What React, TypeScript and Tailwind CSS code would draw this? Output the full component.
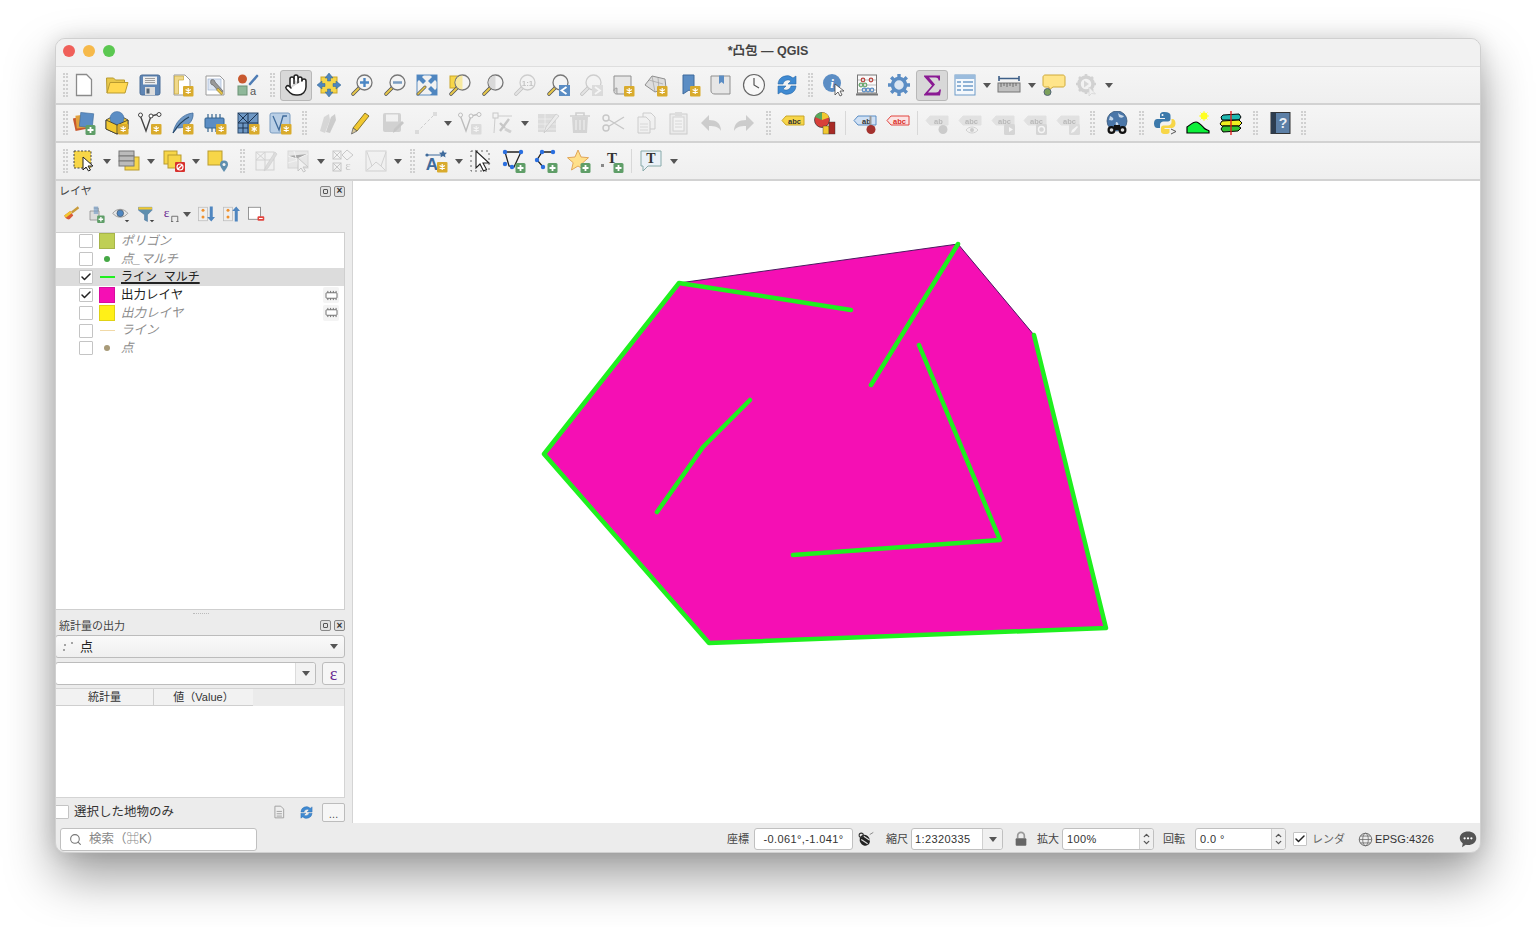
import { Hand, Search, Check, ChevronUp, ChevronDown } from 'lucide-react'
import type { ReactNode } from 'react'

const Nw = (
  <g>
    <rect x="13" y="13" width="10.5" height="10.5" rx="1" fill="#d9ab2d" />
    <path d="M18.2 15v6M15.6 16.5l5.2 3M20.8 16.5l-5.2 3" stroke="#fff" strokeWidth="1.2" />
  </g>
)
const Pl = (
  <g>
    <rect x="13.5" y="14" width="10" height="10" rx="1.5" fill="#5f9e68" />
    <path d="M18.5 16v6M15.5 19h6" stroke="#fff" strokeWidth="1.8" />
  </g>
)
const Mag = (inner?: ReactNode) => (
  <>
    <path d="M9 15 3 21" stroke="#555" strokeWidth="3.6" strokeLinecap="round" />
    <path d="M9 15 3 21" stroke="#e8c84a" strokeWidth="2" strokeLinecap="round" />
    <circle cx="14.5" cy="9.5" r="7.5" fill="#f4f4f4" stroke="#777" strokeWidth="1.3" />
    {inner}
  </>
)
const Label = (fill: string, stroke: string, txt: string, tc = '#333') => (
  <>
    <path d="M5 5h18v9H5L1 9.5z" fill={fill} stroke={stroke} />
    <text x="13.5" y="12.5" fontSize="7.5" fontWeight="700" textAnchor="middle" fill={tc} fontFamily="Liberation Sans">{txt}</text>
  </>
)
const Nodes = (
  <>
    <path d="M2 4l6 16 5-15 8-2" fill="none" stroke="#444" strokeWidth="1.4" />
    <circle cx="2.5" cy="4" r="2" fill="#fff" stroke="#444" />
    <circle cx="13" cy="5" r="2" fill="#fff" stroke="#444" />
    <circle cx="21" cy="3.5" r="2" fill="#fff" stroke="#444" />
  </>
)
const Refresh = (
  <>
    <path d="M3 11a9 9 0 0 1 15-6l3-2v8h-8l3-3a5 5 0 0 0-8 3z" fill="#3f8ad2" stroke="#2a6aa8" strokeWidth=".6" />
    <path d="M21 13a9 9 0 0 1-15 6l-3 2v-8h8l-3 3a5 5 0 0 0 8-3z" fill="#3f8ad2" stroke="#2a6aa8" strokeWidth=".6" />
  </>
)

const icons: Record<string, ReactNode> = {
  new: <path d="M4.5 1.5h10l5 5v16h-15z" fill="#fff" stroke="#8a8a8a" strokeWidth="1.3" />,
  open: (
    <>
      <path d="M2 20 1.5 5h7l2 2h9v3" fill="#e8c84a" stroke="#b99b2f" />
      <path d="M2 20 5 9.5h18L20 20z" fill="#ffd84f" stroke="#b99b2f" />
    </>
  ),
  save: (
    <>
      <rect x="2" y="2" width="20" height="20" rx="2" fill="#5f86b5" stroke="#4a6d96" />
      <rect x="5" y="3.5" width="14" height="8" fill="#eee" />
      <path d="M7 5.5h10M7 7.5h10M7 9.5h10" stroke="#888" strokeWidth=".8" />
      <rect x="7" y="14" width="10" height="8" fill="#ddd" />
      <rect x="8.5" y="15.5" width="3" height="5" fill="#567" />
    </>
  ),
  layout: (
    <>
      <path d="M4 2h11l5 5v15H4z" fill="#fff" stroke="#999" />
      <path d="M4.5 3h9v4h-5v14h-4z" fill="#f1d989" stroke="#c6a93c" strokeWidth=".7" />
      {Nw}
    </>
  ),
  mgr: (
    <>
      <path d="M3 3h14l4 4v15H3z" fill="#fff" stroke="#999" />
      <rect x="5" y="6" width="13" height="11" fill="#dfe7f3" stroke="#9fb4d3" strokeWidth=".7" />
      <path d="M8 7c2-1 4 0 4 2l8 9-2 3-8-9c-2 0-3-2-2-5z" fill="#999" stroke="#555" strokeWidth=".6" />
      <path d="M15 15l5 5-1.5 2-5-5z" fill="#e0c04a" stroke="#8a7420" strokeWidth=".5" />
    </>
  ),
  style: (
    <>
      <circle cx="6.5" cy="6" r="4.5" fill="#c8592f" />
      <path d="M14 11 21 3" stroke="#4f7db5" strokeWidth="2.6" strokeLinecap="round" />
      <rect x="2" y="13" width="9" height="9" fill="#8fb89a" stroke="#6a9275" />
      <text x="17" y="22" fontSize="11" textAnchor="middle" fill="#555" fontFamily="Liberation Sans">a</text>
    </>
  ),
  pan: <Hand size={24} fill="#fff" stroke="#222" strokeWidth={1.5} />,
  panSel: (
    <>
      <rect x="4" y="4" width="16" height="16" fill="#f7d648" stroke="#c9a62a" />
      <path d="M12 0l4 5h-2.5v3h-3V5H8zM12 24l4-5h-2.5v-3h-3v3H8zM0 12l5-4v2.5h3v3H5V16zM24 12l-5-4v2.5h-3v3h3V16z" fill="#4f86c0" stroke="#35648f" strokeWidth=".5" />
    </>
  ),
  zin: Mag(<path d="M14.5 5v9M10 9.5h9" stroke="#4a86c4" strokeWidth="2.4" />),
  zout: Mag(<path d="M10 9.5h9" stroke="#7a9cc0" strokeWidth="2.4" />),
  zfull: (
    <>
      <rect x="2" y="2" width="20" height="20" fill="#f1f1f1" stroke="#5c8ec2" />
      <path d="M2 2h7L7 4l4 4-3 3-4-4-2 2zM22 2v7l-2-2-4 4-3-3 4-4-2-2zM22 22h-7l2-2-4-4 3-3 4 4 2-2z" fill="#4f86c0" />
      <path d="M10 14 3 21" stroke="#555" strokeWidth="3" strokeLinecap="round" />
      <path d="M10 14 3 21" stroke="#e8c84a" strokeWidth="1.6" strokeLinecap="round" />
    </>
  ),
  zsel: (
    <>
      <rect x="2" y="3" width="11" height="12" fill="#f7d648" stroke="#c9a62a" />
      {Mag()}
      <path d="M14.5 2.5a7 7 0 0 0 0 14z" fill="#f7e9a0" />
    </>
  ),
  zlayer: Mag(<path d="M14.5 2.5a7 7 0 0 0 0 14z" fill="#d9d9d9" />),
  znative: Mag(<text x="14.5" y="12.5" fontSize="8" textAnchor="middle" fontWeight="700" fill="#555" fontFamily="Liberation Sans">1:1</text>),
  zlast: (
    <>
      {Mag()}
      <rect x="13" y="12" width="11" height="11" fill="#5b8dc4" />
      <path d="M20.5 14l-5 3.5 5 3.5" fill="none" stroke="#fff" strokeWidth="1.8" />
    </>
  ),
  znext: (
    <>
      {Mag()}
      <rect x="13" y="12" width="11" height="11" fill="#aaa" />
      <path d="M16 14l5 3.5-5 3.5" fill="none" stroke="#fff" strokeWidth="1.8" />
    </>
  ),
  map: (
    <>
      <path d="M3 3h17v18H6c-2 0-3-1-3-3z" fill="#e6e6e6" stroke="#8f8f8f" />
      <path d="M3 18c0-2 1-3 3-3v6" fill="#ccc" stroke="#8f8f8f" strokeWidth=".7" />
      {Nw}
    </>
  ),
  map3d: (
    <>
      <path d="M1 12 8 3l13 3 1 9-11 4z" fill="#ddd" stroke="#8f8f8f" />
      <path d="M5 7l14 4M8 3l3 16M14 4.5 15 17" stroke="#999" strokeWidth=".6" />
      {Nw}
    </>
  ),
  bookmark: (
    <>
      <path d="M6 2h11v18l-5-3-6 4z" fill="#5b8dc4" stroke="#3f6b9c" />
      {Nw}
    </>
  ),
  bookmarks: (
    <>
      <path d="M2 3h19v18H6c-2 0-4-1-4-3z" fill="#e6e6e6" stroke="#8f8f8f" />
      <path d="M10 2.5h5v8.5l-2.5-2-2.5 2z" fill="#5b8dc4" />
    </>
  ),
  clock: (
    <>
      <circle cx="12" cy="12" r="10.5" fill="#f8f8f8" stroke="#666" strokeWidth="1.2" />
      <path d="M12 5v7l5 3" fill="none" stroke="#555" strokeWidth="1.2" />
    </>
  ),
  refresh: Refresh,
  identify: (
    <>
      <circle cx="10" cy="10" r="9" fill="#5b8dc4" />
      <text x="10" y="15" fontSize="13" fontWeight="700" fontStyle="italic" textAnchor="middle" fill="#fff" fontFamily="Liberation Serif">i</text>
      <path d="M13 11v11l3-3 2 4 2-1-2-4h4z" fill="#fff" stroke="#444" strokeWidth=".8" />
    </>
  ),
  abacus: (
    <>
      <rect x="2.5" y="2" width="19" height="18" fill="#fafafa" stroke="#777" />
      <path d="M3 7h18M3 12h18M3 17h18" stroke="#999" strokeWidth=".6" />
      <path d="M1 21.5h22" stroke="#777" strokeWidth="2" />
      <g fill="none" strokeWidth="1.2">
        <g stroke="#b9433d"><circle cx="8" cy="7" r="1.8" /><circle cx="16" cy="7" r="1.8" /></g>
        <g stroke="#69a86f"><circle cx="6" cy="12" r="1.8" /><circle cx="10" cy="12" r="1.8" /></g>
        <g stroke="#5b8dc4"><circle cx="9" cy="17" r="1.8" /><circle cx="13" cy="17" r="1.8" /><circle cx="17" cy="17" r="1.8" /></g>
      </g>
    </>
  ),
  gear: (
    <>
      <circle cx="12" cy="12" r="6.5" fill="#dbe6f2" stroke="#5b8dc4" strokeWidth="3.5" />
      <path d="M12 1v4M12 19v4M1 12h4M19 12h4M4.2 4.2l2.800 2.800M17 17l2.800 2.800M19.800 4.200l-2.800 2.800M7 17l-2.800 2.800" stroke="#5b8dc4" strokeWidth="3.4" />
    </>
  ),
  sigma: <path d="M4 2.5h16v5h-1.500c0-2-1-3-3-3H9l6 7-7 8h8c2 0 3-1 3.500-3H21l-1 6H4v-1l8-9-8-9z" fill="#8a1a93" />,
  table: (
    <>
      <rect x="2" y="2" width="20" height="20" fill="#f4f8fc" stroke="#6e9bc8" />
      <rect x="2" y="2" width="20" height="4" fill="#9bbcdd" />
      <path d="M4 9h4M10 9h10M4 13h4M10 13h10M4 17h4M10 17h10" stroke="#6e9bc8" strokeWidth="1.4" />
    </>
  ),
  ruler: (
    <>
      <path d="M2 3v5M22 3v5M2 5.500h20" stroke="#3e5f88" strokeWidth="1.6" />
      <rect x="1" y="10" width="22" height="9" fill="#c0c0c0" stroke="#777" />
      <path d="M4 10v4M7 10v3M10 10v4M13 10v3M16 10v4M19 10v3" stroke="#555" strokeWidth=".8" />
    </>
  ),
  tips: (
    <>
      <path d="M3 2h18c1 0 2 1 2 2v8c0 1-1 2-2 2H11l-4 3v-3H3c-1 0-2-1-2-2V4c0-1 1-2 2-2z" fill="#ffe58a" stroke="#cfaa3a" />
      <circle cx="5.5" cy="19" r="3.5" fill="#7ba05b" stroke="#567" />
    </>
  ),
  play: (
    <>
      <circle cx="11" cy="11" r="7" fill="none" stroke="#888" strokeWidth="3.5" />
      <path d="M11 1v3M11 18v3M1 11h3M18 11h3M4 4l2 2M16 16l2 2M18 4l-2 2M4 18l2-2" stroke="#888" strokeWidth="2.6" />
      <path d="M9 7.500v7l5-3.500z" fill="#999" />
      <path d="M14 14v9l2.500-2.500 4 .5z" fill="#eee" stroke="#999" strokeWidth=".8" />
    </>
  ),
  dsm: (
    <>
      <rect x="2" y="6" width="13" height="13" transform="rotate(-12 8 12)" fill="#c8592f" />
      <rect x="4" y="4" width="13" height="13" transform="rotate(-6 10 10)" fill="#e2a13c" />
      <rect x="8" y="2" width="13" height="14" transform="rotate(6 14 9)" fill="#5b8dc4" stroke="#3f6b9c" strokeWidth=".6" />
      {Pl}
    </>
  ),
  gpkg: (
    <>
      <path d="M1 9l11-6 11 6v9l-11 5-11-5z" fill="#f1c830" stroke="#333" strokeWidth=".8" />
      <circle cx="12" cy="7.500" r="7" fill="#5b8dc4" stroke="#3f6b9c" strokeWidth=".5" />
      <path d="M1 9l11 5 11-5v9l-11 5-11-5z" fill="#f1c830" stroke="#333" strokeWidth=".8" />
      <path d="M12 14v9" stroke="#333" strokeWidth=".8" />
      {Nw}
    </>
  ),
  shp: <>{Nodes}{Nw}</>,
  feather: (
    <>
      <path d="M3 22C5 12 12 3 23 2c1 8-6 15-15 15" fill="#6d97c4" stroke="#3f6b9c" strokeWidth=".8" />
      <path d="M3 22C8 14 13 9 19 6" fill="none" stroke="#22415f" strokeWidth="1.1" />
      {Nw}
    </>
  ),
  chip: (
    <>
      <rect x="2" y="7" width="19" height="10" rx="1" fill="#5b8dc4" stroke="#35648f" />
      <path d="M5 3v4M9 3v4M13 3v4M17 3v4M5 17v4M9 17v4M13 17v4" stroke="#35648f" strokeWidth="1.2" />
      {Nw}
    </>
  ),
  mesh: (
    <>
      <rect x="2" y="2" width="20" height="20" fill="#6d97c4" stroke="#2f4f73" />
      <path d="M2 12h20M12 2v20M2 2l10 10M12 2 2 12M12 12l10-10M2 17h10M7 12v10" stroke="#1d3553" strokeWidth="1" />
      {Nw}
    </>
  ),
  virtual: (
    <>
      <rect x="2" y="2" width="20" height="20" rx="2" fill="#b9cfe6" stroke="#7b9cc0" />
      <path d="M5 5l6 14 4-14 4 0" fill="none" stroke="#3f6b9c" strokeWidth="1.3" />
      {Nw}
    </>
  ),
  pencils: (
    <>
      <path d="M4 20 8 6l5-3 1 6-5 13z" fill="#999" />
      <path d="M10 21l5-15 4-3 1 6-6 13z" fill="#777" />
    </>
  ),
  pencil: (
    <>
      <path d="M5 17 17 2l4 3L9 20z" fill="#f1c830" stroke="#7a6a22" strokeWidth=".9" />
      <path d="M5 17l4 3-5.500 3z" fill="#d8c89a" stroke="#555" strokeWidth=".7" />
    </>
  ),
  saveEdit: (
    <>
      <rect x="2" y="2" width="18" height="19" rx="2" fill="#888" />
      <rect x="5" y="3.500" width="12" height="7" fill="#eee" />
      <path d="M12 22l1-4 8-8 2 2-8 8z" fill="#666" />
    </>
  ),
  digit: (
    <>
      <path d="M3 21 21 3" stroke="#777" strokeDasharray="3 2" />
      <rect x="1" y="19" width="4" height="4" fill="#aaa" />
      <rect x="19" y="1" width="4" height="4" fill="#aaa" />
    </>
  ),
  vertex: <>{Nodes}{Nw}</>,
  editTool: (
    <>
      <rect x="2" y="2" width="5" height="5" fill="none" stroke="#666" />
      <path d="M4 7 3 22M7 5h14" stroke="#777" />
      <path d="M9 12l5 5M18 8 9 20" stroke="#666" strokeWidth="2.4" />
      <path d="M14 18l6 3" stroke="#888" strokeWidth="3" />
    </>
  ),
  tblPen: (
    <>
      <rect x="2" y="3" width="18" height="18" fill="#aaa" />
      <path d="M2 8h18M2 13h18M2 18h18M9 3v18" stroke="#eee" strokeWidth=".8" />
      <path d="M8 22l2-6 10-13 3 2-11 13z" fill="#ddd" stroke="#666" strokeWidth=".7" />
    </>
  ),
  trash: (
    <>
      <path d="M2 5h20M8 5V2h8v3" stroke="#8f7a70" strokeWidth="1.6" fill="none" />
      <path d="M4 6h16l-1 16H5z" fill="#a5908a" />
      <path d="M8 9v10M12 9v10M16 9v10" stroke="#e8e8e8" strokeWidth="1.2" />
    </>
  ),
  cut: (
    <>
      <circle cx="5" cy="7" r="3" fill="none" stroke="#666" strokeWidth="1.4" />
      <circle cx="5" cy="17" r="3" fill="none" stroke="#666" strokeWidth="1.4" />
      <path d="M7.500 8.500 23 18M7.500 15.500 23 6" stroke="#666" strokeWidth="1.4" />
    </>
  ),
  copy: (
    <>
      <path d="M9 2h8l4 4v12H9z" fill="#eee" stroke="#777" />
      <path d="M4 6h8l4 4v12H4z" fill="#eee" stroke="#777" />
      <path d="M6 13h8M6 16h8M6 19h8" stroke="#888" strokeWidth=".8" />
    </>
  ),
  paste: (
    <>
      <rect x="3" y="3" width="17" height="20" fill="#ddd" stroke="#777" />
      <rect x="6" y="6" width="11" height="14" fill="#f5f5f5" stroke="#888" />
      <rect x="8" y="1" width="7" height="4" fill="#aaa" />
      <path d="M8 10h7M8 13h7M8 16h7" stroke="#888" strokeWidth=".8" />
    </>
  ),
  undo: <path d="M2 12 10 4v5c7 0 12 3 12 11-2-4-6-5-12-5v5z" fill="#777" />,
  redo: <path d="M22 12 14 4v5C7 9 2 12 2 20c2-4 6-5 12-5v5z" fill="#777" />,
  labelY: Label('#f7d648', '#c9a62a', 'abc'),
  diagram: (
    <>
      <circle cx="9" cy="9" r="7.500" fill="#d8403a" stroke="#333" strokeWidth=".7" />
      <path d="M9 9V1.500a7.500 7.500 0 0 1 7 5z" fill="#f1c830" />
      <path d="M9 9 2 6a7.500 7.500 0 0 1 7-4.500z" fill="#58a85c" />
      <rect x="10" y="15" width="6" height="8" fill="#f1c830" stroke="#333" strokeWidth=".4" />
      <rect x="16" y="11" width="6" height="12" fill="#a82a26" stroke="#333" strokeWidth=".4" />
    </>
  ),
  labelB: (
    <>
      {Label('#cfe0f4', '#5b8dc4', 'ab')}
      <path d="M17.500 5v11" stroke="#999" strokeWidth="2" />
      <circle cx="18" cy="18.500" r="4.500" fill="#a4322e" />
    </>
  ),
  labelR: Label('#fbe3e3', '#e2453f', 'abc', '#d92f2a'),
  labelPin: (
    <>
      {Label('#bbb', '#bbb', 'ab')}
      <circle cx="18" cy="18.500" r="4.500" fill="#777" />
    </>
  ),
  labelEye: (
    <>
      {Label('#bbb', '#bbb', 'abc')}
      <path d="M8 19c3-4 9-4 12 0-3 4-9 4-12 0z" fill="#eee" stroke="#888" />
      <circle cx="14" cy="19" r="2" fill="#777" />
    </>
  ),
  labelMove: (
    <>
      {Label('#bbb', '#bbb', 'abc')}
      <rect x="13" y="13" width="11" height="11" rx="1.500" fill="#999" />
      <path d="M15 18.500h3v-2.500l4 2.500-4 2.500v-2.500z" fill="#fff" />
    </>
  ),
  labelRot: (
    <>
      {Label('#bbb', '#bbb', 'abc')}
      <rect x="13" y="13" width="11" height="11" rx="1.500" fill="#999" />
      <circle cx="18.500" cy="18.500" r="3" fill="none" stroke="#fff" strokeWidth="1.4" />
    </>
  ),
  labelEd: (
    <>
      {Label('#bbb', '#bbb', 'abc')}
      <rect x="13" y="13" width="11" height="11" rx="1.500" fill="#aaa" />
      <path d="M15 22l1-3 5-4 1 1-4 5z" fill="#fff" />
    </>
  ),
  meta: (
    <>
      <circle cx="12" cy="10" r="10" fill="#4a76a8" stroke="#2a4a6e" strokeWidth=".7" />
      <path d="M5 5c3 1 4 3 3 4S4 9 4 9M13 2c2 2 4 2 6 3-1 2-3 2-5 1zM11 11c2 0 3 2 2 4-2 0-3-2-2-4z" fill="#c7d8ea" />
      <circle cx="6.500" cy="19" r="4" fill="#111" />
      <circle cx="17.500" cy="19" r="4" fill="#111" />
      <rect x="9" y="14" width="6" height="5" fill="#111" />
      <circle cx="6.500" cy="19" r="1.800" fill="#ddd" />
      <circle cx="17.500" cy="19" r="1.800" fill="#ddd" />
    </>
  ),
  python: (
    <>
      <path d="M11.500 1C7 1 7 3 7 4.500V7h5v1H4.500C2 8 1 10 1 12.500S2 17 4.500 17H7v-3c0-2 1.500-3.500 3.500-3.500h4.500c1.500 0 2.500-1 2.500-2.500V4.500C17.500 2.500 15.500 1 11.500 1z" fill="#3c79ab" />
      <circle cx="9.500" cy="4" r="1" fill="#fff" />
      <path d="M18.500 8v3c0 2-1.500 3.500-3.500 3.500h-4.500C9 14.500 8 15.500 8 17v3.500c0 2 2 2.500 4.500 2.500 2 0 3.500-.5 4-1.500V18h-5v-1h7c2.500 0 4-2 4-4.500S21.500 8 19 8z" fill="#f7d648" />
      <path d="M18 18l5 2.500-5 2.500" fill="none" stroke="#555" strokeWidth="1" />
    </>
  ),
  hill: (
    <>
      <path d="M1 22v-6c3-2 6-5 9-5s6 4 8 6 4 2 5 3v2z" fill="#0cf03a" stroke="#000" strokeWidth="1.2" />
      <circle cx="18" cy="5" r="3.500" fill="#ffff20" />
      <path d="M18 0v10M13 5h10M14.500 1.500l7 7M21.500 1.500l-7 7" stroke="#ffff20" strokeWidth=".9" />
    </>
  ),
  stack: (
    <>
      <path d="M4 4l16-1 2 3-2 3H3L2 6z" fill="#20b8b0" stroke="#000" />
      <path d="M3 10l17-1 3 3-3 3H3l-2-2z" fill="#f0f020" stroke="#000" />
      <path d="M4 15h15l3 2-3 3-15 1-2-3z" fill="#30c030" stroke="#000" />
      <path d="M12 0v24" stroke="#e02020" strokeWidth="1.4" />
    </>
  ),
  help: (
    <>
      <rect x="3" y="1.500" width="19" height="21" fill="#5c7fa6" stroke="#333" />
      <rect x="3" y="1.500" width="5" height="21" fill="#2d3d50" />
      <text x="15" y="17" fontSize="14" textAnchor="middle" fontWeight="700" fill="#e8eef5" fontFamily="Liberation Sans">?</text>
    </>
  ),
  sel: (
    <>
      <rect x="2" y="2" width="17" height="17" fill="#f7d648" stroke="#444" strokeDasharray="2 1.500" />
      <path d="M11 8v13l3-3 2.500 4 2-1-2.500-4h5z" fill="#fff" stroke="#222" />
    </>
  ),
  selAll: (
    <>
      <rect x="8" y="8" width="14" height="13" fill="#f7d648" stroke="#b99b2f" />
      <rect x="2" y="2" width="15" height="5" fill="#bbb" stroke="#777" />
      <rect x="2" y="7" width="15" height="5" fill="#bbb" stroke="#777" />
      <rect x="2" y="12" width="15" height="5" fill="#bbb" stroke="#777" />
    </>
  ),
  desel: (
    <>
      <rect x="2" y="2" width="13" height="13" fill="#f7d648" stroke="#b99b2f" />
      <rect x="6" y="6" width="13" height="13" fill="#f7d648" stroke="#b99b2f" />
      <rect x="13" y="13" width="10" height="10" rx="1" fill="#d8322e" />
      <circle cx="18" cy="18" r="3" fill="none" stroke="#fff" strokeWidth="1.2" />
      <path d="M16 20l4-4" stroke="#fff" strokeWidth="1.2" />
    </>
  ),
  selLoc: (
    <>
      <rect x="2" y="2" width="14" height="14" fill="#f7d648" stroke="#b99b2f" />
      <path d="M18 23c-3-4-4-6-4-7.500a4 4 0 0 1 8 0c0 1.500-1 3.500-4 7.500z" fill="#5f8fae" />
      <circle cx="18" cy="15.500" r="1.500" fill="#f4f4f4" />
    </>
  ),
  tblEd: (
    <>
      <rect x="2" y="3" width="18" height="18" fill="#eee" stroke="#888" />
      <path d="M2 11h18M11 3v18M2 3l9 8M11 3 2 11" stroke="#888" />
      <path d="M10 22l2-5 9-14 2 2-9 14z" fill="#aaa" stroke="#777" strokeWidth=".6" />
    </>
  ),
  mapCur: (
    <>
      <rect x="2" y="2" width="20" height="17" fill="#ccc" stroke="#999" />
      <path d="M2 7l9 3 11-5M8 2l5 17M2 14l10-3" stroke="#f4f4f4" />
      <path d="M12 9v13l3-3 2.500 4 2-1-2.500-4h5z" fill="#eee" stroke="#666" />
    </>
  ),
  epsGrid: (
    <>
      <rect x="2" y="2" width="8" height="8" fill="none" stroke="#666" />
      <path d="M2 2l8 8M10 2l-8 8" stroke="#666" />
      <rect x="2" y="14" width="8" height="8" fill="none" stroke="#666" />
      <path d="M2 14l8 8M10 14l-8 8" stroke="#666" />
      <path d="M16 1l6 5-6 5-5-5z" fill="none" stroke="#666" />
      <text x="17" y="21" fontSize="13" textAnchor="middle" fill="#666" fontFamily="Liberation Serif">ε</text>
    </>
  ),
  meshOff: (
    <>
      <rect x="2" y="2" width="20" height="20" fill="#eee" stroke="#888" />
      <path d="M3 3l5 14 4-4 5 4 5-14M8 17 3 21M17 17l4 4" fill="none" stroke="#888" />
    </>
  ),
  labelA: (
    <>
      <path d="M2 6h16" stroke="#3f6b9c" strokeWidth="1.2" />
      <circle cx="3" cy="6" r="1.600" fill="#3f6b9c" />
      <path d="M19 1l1.200 2.500 2.800.3-2 2 .5 2.700L19 7l-2.500 1.500.5-2.700-2-2 2.800-.3z" fill="#3f6b9c" />
      <text x="8" y="21" fontSize="17" fontWeight="700" textAnchor="middle" fill="#3f6b9c" fontFamily="Liberation Sans">A</text>
      {Nw}
    </>
  ),
  annSel: (
    <>
      <rect x="2" y="2" width="18" height="20" fill="none" stroke="#666" strokeDasharray="2 3" />
      <path d="M7 2v17l4-4 3.500 7 3-1.500L14 14h6z" fill="#fff" stroke="#222" strokeWidth="1.1" />
    </>
  ),
  annPoly: (
    <>
      <path d="M3 3h16l-7 15-5-1z" fill="none" stroke="#222" strokeWidth="1.3" />
      <g fill="#2a6fe0"><circle cx="3" cy="3" r="2.200" /><circle cx="19" cy="3" r="2.200" /><circle cx="3" cy="15" r="2.200" /><circle cx="10" cy="18" r="2.200" /></g>
      {Pl}
    </>
  ),
  annLine: (
    <>
      <path d="M19 3H8L3 11l7 8" fill="none" stroke="#222" strokeWidth="1.3" />
      <g fill="#2a6fe0"><circle cx="19" cy="3" r="2.200" /><circle cx="8" cy="3" r="2.200" /><circle cx="3" cy="11" r="2.200" /><circle cx="9" cy="18" r="2.200" /></g>
      {Pl}
    </>
  ),
  annStar: (
    <>
      <path d="M11 1l3 7 7.500.7-5.700 5 1.700 7.300L11 17l-6.500 4 1.700-7.300-5.700-5L8 8z" fill="#ffe08a" stroke="#e0a65a" />
      {Pl}
    </>
  ),
  annText: (
    <>
      <rect x="1" y="15" width="3" height="3" fill="#888" />
      <text x="12" y="14" fontSize="15" fontWeight="700" textAnchor="middle" fill="#333" fontFamily="Liberation Serif">T</text>
      {Pl}
    </>
  ),
  balloon: (
    <>
      <path d="M2 2h20v15H9l-5 5v-5H2z" fill="#eaf1f7" stroke="#8aa" />
      <text x="12" y="14" fontSize="14" fontWeight="700" textAnchor="middle" fill="#333" fontFamily="Liberation Serif">T</text>
    </>
  ),
}

function Arrow({ className = '' }: { className?: string }) {
  return (
    <svg viewBox="0 0 8 5" className={`w-[8px] h-[5px] ${className}`}>
      <path d="M0 0h8L4 5z" fill="#555" />
    </svg>
  )
}

function Icon({ name, size = 24, off }: { name: string; size?: number; off?: boolean }) {
  return (
    <svg viewBox="0 0 24 24" style={{ width: size, height: size }} className={off ? 'opacity-30 grayscale' : ''}>
      {icons[name]}
    </svg>
  )
}

// tokens: G grip, g narrow grip, S separator, v dropdown arrow, ~name disabled, !name toggled on
function Toolbar({ items }: { items: string }) {
  return (
    <div className="flex items-center h-[38px] border-b-2 border-[#d2d2d2] bg-gradient-to-b from-[#f5f5f5] to-[#efefef]">
      <div className="w-[12px] flex justify-end">
        <div className="w-[5px] h-[24px] border-x-2 border-dotted border-[#d0d0d0]" />
      </div>
      {items.split(' ').map((t, i) => {
        if (t === 'G' || t === 'g')
          return (
            <div key={i} className={`flex justify-center ${t === 'G' ? 'w-[16px]' : 'w-[14.500px]'}`}>
              <div className="w-[5px] h-[24px] border-x-2 border-dotted border-[#d0d0d0]" />
            </div>
          )
        if (t === 'S')
          return (
            <div key={i} className="w-[7px] flex justify-center">
              <div className="w-px h-[24px] bg-[#d8d8d8]" />
            </div>
          )
        if (t === 'v')
          return (
            <div key={i} className="w-[12px] flex justify-center">
              <Arrow />
            </div>
          )
        const off = t[0] === '~'
        const on = t[0] === '!'
        const name = off || on ? t.slice(1) : t
        return (
          <div key={i} className="w-[32.700px] h-[32px] flex items-center justify-center shrink-0">
            <div className={`w-[32px] h-[31px] flex items-center justify-center rounded-[3px] ${on ? 'bg-[#d8d8d8] border border-[#b8b8b8]' : ''}`}>
              <Icon name={name} off={off} />
            </div>
          </div>
        )
      })}
    </div>
  )
}

function DockTitle({ text }: { text: string }) {
  return (
    <div className="flex items-center justify-between h-[18px] pl-[3px] pr-[1px] text-[11px] text-[#444]">
      <span>{text}</span>
      <div className="flex gap-[3px]">
        <div className="w-[11px] h-[11px] rounded-[2px] border border-[#888] bg-[#e2e2e2] flex items-center justify-center">
          <div className="w-[5px] h-[5px] rounded-[1px] border border-[#555]" />
        </div>
        <div className="w-[11px] h-[11px] rounded-[2px] border border-[#888] bg-[#e2e2e2] flex items-center justify-center text-[10px] font-bold leading-none text-[#333]">×</div>
      </div>
    </div>
  )
}

type LayerRow = {
  name: string
  on?: boolean
  current?: boolean
  swatch: ReactNode
  memory?: boolean
}

const fillSwatch = (c: string) => <div className="w-[16px] h-[16px] border border-[#0000001f]" style={{ background: c }} />
const dotSwatch = (c: string) => <div className="w-[6px] h-[6px] rounded-full" style={{ background: c }} />
const lineSwatch = (c: string, h: number) => <div className="w-[15px]" style={{ background: c, height: h }} />

const layers: LayerRow[] = [
  { name: 'ポリゴン', swatch: fillSwatch('#bfcf55') },
  { name: '点_マルチ', swatch: dotSwatch('#45a845') },
  { name: 'ライン_マルチ', on: true, current: true, swatch: lineSwatch('#1ff01f', 2) },
  { name: '出力レイヤ', on: true, swatch: fillSwatch('#f50fb4') },
  { name: '出力レイヤ', swatch: fillSwatch('#fff018'), memory: true },
  { name: 'ライン', swatch: lineSwatch('#f0d9a8', 1) },
  { name: '点', swatch: dotSwatch('#a89a78') },
]

function Box({ on, className = '' }: { on?: boolean; className?: string }) {
  return (
    <div className={`w-[14px] h-[14px] bg-white border border-[#c4c4c4] rounded-[1px] flex items-center justify-center shrink-0 ${className}`}>
      {on && <Check size={12} strokeWidth={3} className="text-[#222]" />}
    </div>
  )
}

function Spin({ text, width }: { text: string; width: string }) {
  return (
    <div className={`h-[22px] ${width} bg-white border border-[#c0c0c0] rounded-[3px] flex items-center text-[11px] text-[#333] tracking-[0.4px]`}>
      <span className="flex-1 pl-[4px]">{text}</span>
      <div className="w-[14px] h-full border-l border-[#d0d0d0] bg-[#f0f0f0] rounded-r-[3px] flex flex-col items-center justify-center">
        <ChevronUp size={9} strokeWidth={3.5} className="text-[#555] -mb-[1px]" />
        <ChevronDown size={9} strokeWidth={3.5} className="text-[#555] -mt-[1px]" />
      </div>
    </div>
  )
}

const row1 = 'new open save layout mgr style G !pan panSel zin zout zfull zsel zlayer ~znative zlast ~znext map map3d bookmark bookmarks clock refresh g identify abacus gear !sigma table v ruler v tips ~play v'
const row2 = 'dsm gpkg shp feather chip mesh virtual g ~pencils pencil ~saveEdit ~digit v ~vertex ~editTool v ~tblPen ~trash ~cut ~copy ~paste ~undo ~redo G labelY diagram S labelB labelR S ~labelPin ~labelEye ~labelMove ~labelRot ~labelEd G meta G python hill stack G help G'
const row3 = 'sel v selAll v desel v selLoc g ~tblEd ~mapCur v ~epsGrid ~meshOff v G labelA v annSel annPoly annLine annStar annText S balloon v'

export default function App() {
  return (
    <div className="w-[1536px] h-[927px] bg-white pt-[38px] pl-[55px] overflow-hidden font-['Liberation_Sans','Noto_Sans_CJK_JP',sans-serif]">
      <div className="w-[1426px] h-[815px] rounded-[10px] overflow-hidden flex flex-col bg-[#ececec] border border-[#d0d0d0] shadow-[0_24px_50px_rgba(0,0,0,0.38),0_0_20px_rgba(0,0,0,0.12)]">
        {/* title bar */}
        <div className="relative h-[28px] flex items-center justify-center pb-[3px] bg-[#f1f1f1] border-b border-[#dedede] shrink-0">
          <div className="absolute left-[7px] top-[6px] flex gap-[8px]">
            <div className="w-[12px] h-[12px] rounded-full bg-[#f0605a]" />
            <div className="w-[12px] h-[12px] rounded-full bg-[#f6b94a]" />
            <div className="w-[12px] h-[12px] rounded-full bg-[#5bc851]" />
          </div>
          <span className="text-[12.500px] font-semibold text-[#444]">*凸包 — QGIS</span>
        </div>

        <Toolbar items={row1} />
        <Toolbar items={row2} />
        <Toolbar items={row3} />

        <div className="flex flex-1 min-h-0">
          {/* left docks */}
          <div className="w-[290px] flex flex-col shrink-0 pt-[2px]">
            <DockTitle text="レイヤ" />
            <div className="h-[29px] flex items-center pl-[6px] mb-[3px] shrink-0">
              <svg viewBox="0 0 24 24" className="w-[18px] h-[18px] mr-[7px]">
                <path d="M3 14l8-6 4 6-5 5c-3 1-6-2-7-5z" fill="#d85a3a" />
                <path d="M3 14l8-6 2 3-8 6z" fill="#f1c830" />
                <path d="M13 10 22 3" stroke="#c89a3a" strokeWidth="3" />
              </svg>
              <svg viewBox="0 0 24 24" className="w-[18px] h-[18px] mr-[7px]">
                <path d="M9 4h6v4M4 8h12v12H4z" fill="#ddd" stroke="#888" />
                <rect x="9" y="2" width="6" height="10" fill="#6d97c4" opacity=".6" />
                {Pl}
              </svg>
              <svg viewBox="0 0 24 24" className="w-[18px] h-[18px] mr-[7px]">
                <path d="M1 11c5-7 15-7 20 0-5 7-15 7-20 0z" fill="#e6e6e6" stroke="#888" />
                <circle cx="11" cy="11" r="4.500" fill="#4f86c0" stroke="#333" strokeWidth=".6" />
                <path d="M17 20h6l-3 3z" fill="#444" />
              </svg>
              <svg viewBox="0 0 24 24" className="w-[18px] h-[18px] mr-[7px]">
                <path d="M2 3h18v4l-6 6v9l-4-2v-7L2 7z" fill="#5f8fae" stroke="#3f6b9c" strokeWidth=".6" />
                <path d="M2 3h18v3H2z" fill="#f1c830" />
                <path d="M17 20h6l-3 3z" fill="#444" />
              </svg>
              <svg viewBox="0 0 24 24" className="w-[18px] h-[18px]">
                <text x="6" y="16" fontSize="18" fill="#6a2c91" fontFamily="Liberation Serif" textAnchor="middle">ε</text>
                <path d="M13 22v-7h8v7M12 22h3M19 22h3" fill="none" stroke="#666" strokeWidth="1.2" />
              </svg>
              <Arrow className="ml-[3px] mr-[6px]" />
              <svg viewBox="0 0 24 24" className="w-[18px] h-[18px] mr-[7px]">
                <rect x="2" y="3" width="12" height="18" fill="#eee" stroke="#bbb" />
                <circle cx="8" cy="7" r="2" fill="#f0902c" />
                <circle cx="8" cy="16" r="2" fill="#f0902c" />
                <path d="M17 2v14h-3.500l5.500 6 5-6h-3V2z" fill="#4f86c0" />
              </svg>
              <svg viewBox="0 0 24 24" className="w-[18px] h-[18px] mr-[7px]">
                <rect x="2" y="3" width="12" height="18" fill="#eee" stroke="#bbb" />
                <circle cx="8" cy="7" r="2" fill="#f0902c" />
                <circle cx="8" cy="16" r="2" fill="#f0902c" />
                <path d="M17 22V8h-3.500l5.500-6 5 6h-3v14z" fill="#4f86c0" />
              </svg>
              <svg viewBox="0 0 24 24" className="w-[18px] h-[18px]">
                <rect x="2" y="3" width="16" height="16" fill="#fff" stroke="#777" />
                <rect x="14" y="15" width="9" height="6" rx="1.500" fill="#e2453f" />
                <path d="M16 18h5" stroke="#fff" strokeWidth="1.4" />
              </svg>
            </div>
            {/* layer tree */}
            <div className="h-[378px] shrink-0 bg-white border border-[#cfcfcf] mr-[1px] -ml-[1px]">
              {layers.map((l, i) => (
                <div key={i} className={`relative flex items-center h-[17.850px] pl-[23px] ${l.current ? 'bg-[#dcdcdc]' : ''}`}>
                  <Box on={l.on} />
                  <div className="w-[16px] h-[16px] ml-[6px] flex items-center justify-center">{l.swatch}</div>
                  <span className={`ml-[6px] leading-none ${l.current ? 'text-[12px] underline decoration-[1.5px]' : 'text-[12.500px]'} ${l.on ? 'text-[#222]' : 'italic text-[#8c8c8c]'}`}>{l.name}</span>
                  {(l.memory || (l.on && !l.current)) && (
                    <div className="absolute right-[5px] top-[1px] w-[16px] h-[16px] rounded-[2px] bg-[#f4f4f4] flex items-center justify-center">
                      <svg viewBox="0 0 14 12" className="w-[13px] h-[11px]">
                        <path d="M3 1v2M6 1v2M9 1v2M12 1v2M3 9v2M6 9v2M9 9v2M12 9v2" stroke="#666" />
                        <rect x="1" y="3" width="12" height="6" rx="1" fill="#fff" stroke="#666" />
                      </svg>
                    </div>
                  )}
                </div>
              ))}
            </div>
            <div className="h-[8px] flex justify-center items-center shrink-0">
              <div className="w-[16px] border-t border-dotted border-[#bbb]" />
            </div>
            <DockTitle text="統計量の出力" />
            <div className="h-[23px] bg-gradient-to-b from-[#fafafa] to-[#efefef] border border-[#bcbcbc] rounded-[3px] flex items-center pl-[6px] pr-[6px] mr-[1px] shrink-0 -ml-[1px] mt-[1px]">
              <svg viewBox="0 0 14 12" className="w-[14px] h-[12px]">
                <circle cx="2" cy="9" r="1" fill="#888" />
                <circle cx="3" cy="4" r="1" fill="#888" />
                <circle cx="10" cy="2" r="1" fill="#888" />
              </svg>
              <span className="ml-[4px] text-[13px] text-[#222] flex-1">点</span>
              <Arrow />
            </div>
            <div className="flex mt-[4px] mr-[1px] -ml-[1px] gap-[6px] shrink-0">
              <div className="flex-1 h-[23px] bg-white border border-[#bcbcbc] rounded-[3px] flex justify-end items-center">
                <div className="w-[20px] h-full border-l border-[#dcdcdc] bg-[#f2f2f2] flex items-center justify-center rounded-r-[3px]">
                  <Arrow />
                </div>
              </div>
              <div className="w-[23px] h-[23px] bg-[#f6f6f6] border border-[#bcbcbc] rounded-[3px] flex items-center justify-center text-[18px] leading-none text-[#6a2c91] font-['Liberation_Serif',serif]">ε</div>
            </div>
            {/* statistics table */}
            <div className="h-[110px] mt-[3px] mr-[1px] -ml-[1px] bg-white border border-[#d4d4d4] shrink-0">
              <div className="flex h-[17px] bg-[#ebebeb] text-[11px] text-[#333]">
                <div className="w-[98px] flex items-center justify-center border-r border-[#cfcfcf] border-b bg-[#f2f2f2]">統計量</div>
                <div className="w-[99px] flex items-center justify-center border-b border-[#cfcfcf] bg-[#f2f2f2]">値（Value）</div>
              </div>
            </div>
            <div className="flex items-center h-[28px] mr-[1px] text-[12.500px] text-[#333] -ml-[1px] shrink-0">
              <Box />
              <span className="ml-[5px] flex-1">選択した地物のみ</span>
              <svg viewBox="0 0 24 24" className="w-[14px] h-[14px] mr-[13px]">
                <path d="M5 2h10l5 5v15H5z" fill="#eee" stroke="#999" strokeWidth="1.5" />
                <path d="M8 11h9M8 15h9M8 19h9" stroke="#999" strokeWidth="1.5" />
              </svg>
              <svg viewBox="0 0 24 24" className="w-[15px] h-[15px] mr-[8px]">{Refresh}</svg>
              <div className="w-[23px] h-[19px] bg-[#f6f6f6] border border-[#bcbcbc] rounded-[2px] flex items-end justify-center text-[10px] leading-[13px] text-[#444]">…</div>
            </div>
          </div>

          {/* map canvas */}
          <div className="ml-[6px] flex-1 bg-white border-l border-[#d4d4d4] min-w-0">
            <svg viewBox="353 181 1127 642" className="block w-full h-full">
              <path d="M679 283 958 244 1034 335 1106 628 709 643 544 454Z" fill="#f50fb4" stroke="#4a1a60" strokeWidth="1" />
              <g fill="none" stroke="#1ff01f" strokeWidth="4.5" strokeLinecap="round" strokeLinejoin="round">
                <path d="M1034 335 1106 628 709 643 544 454 679 283 851 310" />
                <path d="M958 244 871 385" />
                <path d="M919 345 1000 540 793 555" />
                <path d="M750 400 703 447 657 512" />
              </g>
            </svg>
          </div>
        </div>

        {/* status bar */}
        <div className="h-[29px] flex items-center pl-[4px] pt-[3px] shrink-0 whitespace-nowrap text-[11px] text-[#444]">
          <div className="w-[197px] h-[23px] shrink-0 bg-white border border-[#c0c0c0] rounded-[3px] flex items-center pl-[8px] text-[12.500px] text-[#888]">
            <Search size={13} className="text-[#777] mr-[7px]" />
            検索（⌘K）
          </div>
          <span className="ml-[470px] shrink-0">座標</span>
          <div className="ml-[5px] w-[99px] h-[22px] shrink-0 bg-white border border-[#c0c0c0] rounded-[3px] flex items-center justify-center text-[#333] tracking-[0.4px]">-0.061°,-1.041°</div>
          <svg viewBox="0 0 24 24" className="ml-[4px] w-[17px] h-[17px] shrink-0">
            <ellipse cx="11" cy="13" rx="7" ry="8" transform="rotate(-30 11 13)" fill="#222" />
            <path d="M6 12l9 6M9 7l9 6" stroke="#ddd" strokeWidth="1.5" />
            <circle cx="6" cy="6" r="3" fill="none" stroke="#333" strokeWidth="1.5" />
            <path d="M18 5l5-3" stroke="#666" />
          </svg>
          <span className="ml-[12px] shrink-0">縮尺</span>
          <div className="ml-[3px] w-[92px] h-[22px] shrink-0 bg-white border border-[#c0c0c0] rounded-[3px] flex items-center text-[#333] tracking-[0.4px]">
            <span className="flex-1 pl-[3px]">1:2320335</span>
            <div className="w-[20px] h-full border-l border-[#d0d0d0] bg-[#f0f0f0] flex items-center justify-center rounded-r-[3px]">
              <Arrow />
            </div>
          </div>
          <svg viewBox="0 0 24 24" className="ml-[10px] w-[16px] h-[16px] shrink-0">
            <path d="M7 11V7a5 5 0 0 1 10 0v4" fill="none" stroke="#999" strokeWidth="2.5" />
            <rect x="4" y="11" width="16" height="11" rx="1.500" fill="#666" />
          </svg>
          <span className="ml-[8px] shrink-0">拡大</span>
          <div className="ml-[3px] shrink-0"><Spin text="100%" width="w-[92px]" /></div>
          <span className="ml-[9px] shrink-0">回転</span>
          <div className="ml-[10px] shrink-0"><Spin text="0.0 °" width="w-[91px]" /></div>
          <Box on className="ml-[7px]" />
          <span className="ml-[5px] shrink-0 text-[#666]">レンダ</span>
          <svg viewBox="0 0 24 24" className="ml-[13px] w-[15px] h-[15px] shrink-0">
            <circle cx="12" cy="12" r="10" fill="none" stroke="#666" strokeWidth="1.5" />
            <ellipse cx="12" cy="12" rx="4.500" ry="10" fill="none" stroke="#666" strokeWidth="1.2" />
            <path d="M2 12h20M4 6.500h16M4 17.500h16" stroke="#666" strokeWidth="1.2" />
          </svg>
          <span className="ml-[2px] shrink-0 tracking-[0.1px] text-[#333]">EPSG:4326</span>
          <svg viewBox="0 0 24 24" className="ml-[25px] w-[18px] h-[18px] shrink-0">
            <path d="M12 2c6 0 11 3.500 11 9s-5 9-11 9c-1 0-2 0-3-.3L4 23l1-5c-2-2-4-4-4-7 0-5.500 5-9 11-9z" fill="#555" />
            <circle cx="7.500" cy="11" r="1.500" fill="#fff" />
            <circle cx="12" cy="11" r="1.500" fill="#fff" />
            <circle cx="16.500" cy="11" r="1.500" fill="#fff" />
          </svg>
        </div>
      </div>
    </div>
  )
}
